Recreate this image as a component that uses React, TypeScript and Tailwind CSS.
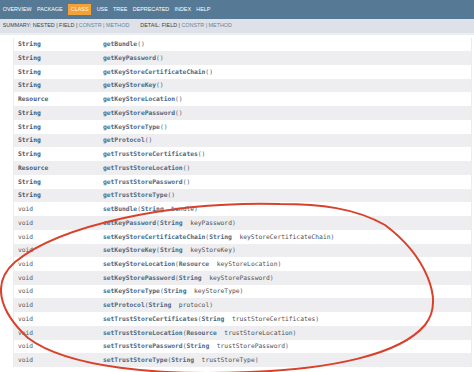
const NAV = ["OVERVIEW", "PACKAGE", "CLASS", "USE", "TREE", "DEPRECATED", "INDEX", "HELP"];

type Row = { type: string; name: string; param?: [string, string] };

const ROWS: Row[] = [
  { type: "String", name: "getBundle" },
  { type: "String", name: "getKeyPassword" },
  { type: "String", name: "getKeyStoreCertificateChain" },
  { type: "String", name: "getKeyStoreKey" },
  { type: "Resource", name: "getKeyStoreLocation" },
  { type: "String", name: "getKeyStorePassword" },
  { type: "String", name: "getKeyStoreType" },
  { type: "String", name: "getProtocol" },
  { type: "String", name: "getTrustStoreCertificates" },
  { type: "Resource", name: "getTrustStoreLocation" },
  { type: "String", name: "getTrustStorePassword" },
  { type: "String", name: "getTrustStoreType" },
  { type: "void", name: "setBundle", param: ["String", "bundle"] },
  { type: "void", name: "setKeyPassword", param: ["String", "keyPassword"] },
  { type: "void", name: "setKeyStoreCertificateChain", param: ["String", "keyStoreCertificateChain"] },
  { type: "void", name: "setKeyStoreKey", param: ["String", "keyStoreKey"] },
  { type: "void", name: "setKeyStoreLocation", param: ["Resource", "keyStoreLocation"] },
  { type: "void", name: "setKeyStorePassword", param: ["String", "keyStorePassword"] },
  { type: "void", name: "setKeyStoreType", param: ["String", "keyStoreType"] },
  { type: "void", name: "setProtocol", param: ["String", "protocol"] },
  { type: "void", name: "setTrustStoreCertificates", param: ["String", "trustStoreCertificates"] },
  { type: "void", name: "setTrustStoreLocation", param: ["Resource", "trustStoreLocation"] },
  { type: "void", name: "setTrustStorePassword", param: ["String", "trustStorePassword"] },
  { type: "void", name: "setTrustStoreType", param: ["String", "trustStoreType"] },
];

function NavBar() {
  return (
    <div className="h-[19px] bg-[#567a96] flex items-center gap-[5.3px] pl-[2.7px] font-['Liberation_Sans',Arial,sans-serif] text-[5.4px] text-white leading-none">
      {NAV.map((item) =>
        item === "CLASS" ? (
          <span key={item} className="h-[10.3px] px-[2.9px] flex items-center bg-[#f3a23a] text-[#fff4e2]">
            {item}
          </span>
        ) : (
          <span key={item}>{item}</span>
        )
      )}
    </div>
  );
}

function SubNav() {
  return (
    <div className="h-[14px] bg-[#dee2e8] flex items-center pl-[2.7px] font-['Liberation_Sans',Arial,sans-serif] text-[5.4px] leading-none whitespace-pre">
      <span className="text-[#3a3f45]">SUMMARY: NESTED | FIELD | </span>
      <span className="text-[#6a8299]">CONSTR | METHOD</span>
      <span className="ml-[11px] text-[#3a3f45]">DETAIL: FIELD | </span>
      <span className="text-[#6a8299]">CONSTR | METHOD</span>
    </div>
  );
}

function MethodRow({ row, odd }: { row: Row; odd: boolean }) {
  const isVoid = row.type === "void";
  return (
    <div className={`h-[13.74px] flex items-center ${odd ? "bg-[#eeeef0]" : "bg-white"}`}>
      <div className={`w-[89px] pl-[4px] ${isVoid ? "text-[#55595e]" : "font-bold text-[#46596b]"}`}>{row.type}</div>
      <div className="whitespace-pre text-[#4a6782]">
        <span className="font-bold">{row.name}</span>
        {row.param ? (
          <>
            (<span className="font-bold">{row.param[0]}</span>
            {"  "}
            <span className="text-[#4d5157]">{row.param[1]}</span>)
          </>
        ) : (
          "()"
        )}
      </div>
    </div>
  );
}

export default function App() {
  return (
    <div className="relative w-[474px] h-[372px] overflow-hidden bg-white">
      <NavBar />
      <SubNav />
      <div className="h-[2px] bg-[#eceef1]" />
      <div className="h-[2.5px] bg-white" />
      <div className="ml-[13px] mr-[2px] border-x border-[#ececee] font-['DejaVu_Sans_Mono',Menlo,monospace] text-[6.3px] leading-none">
        {ROWS.map((row, i) => (
          <MethodRow key={row.name} row={row} odd={i % 2 === 1} />
        ))}
      </div>

      {/* hand-drawn red annotation loop */}
      <svg
        className="absolute inset-0 pointer-events-none"
        width={474}
        height={372}
        viewBox="0 0 474 372"
        fill="none"
      >
        <path
          d="M 280 204 C 172 201 60 225 15 262 C -8 282 -2 310 28 338 C 68 368 160 376 250 372 C 330 369 400 355 425 325 C 445 300 425 255 385 225 C 355 208 320 204 280 204"
          stroke="#d8412a"
          strokeWidth={2}
          strokeLinecap="round"
        />
      </svg>
    </div>
  );
}
